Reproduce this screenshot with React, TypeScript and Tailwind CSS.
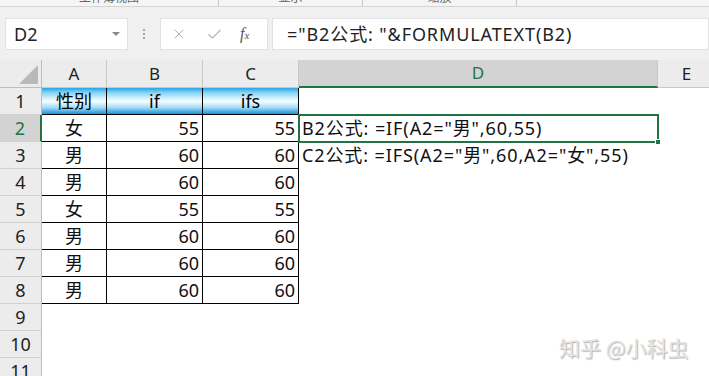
import React from "react";
import { X, Check } from "lucide-react";

const FONT = '"Noto Sans", "Noto Sans CJK SC", sans-serif';

const rows: { a: string; b: string; c: string }[] = [
  { a: "女", b: "55", c: "55" },
  { a: "男", b: "60", c: "60" },
  { a: "男", b: "60", c: "60" },
  { a: "女", b: "55", c: "55" },
  { a: "男", b: "60", c: "60" },
  { a: "男", b: "60", c: "60" },
  { a: "男", b: "60", c: "60" },
];

const dText: Record<number, string> = {
  2: 'B2公式: =IF(A2="男",60,55)',
  3: 'C2公式: =IFS(A2="男",60,A2="女",55)',
};

function RowHeader({ n }: { n: number }) {
  const selected = n === 2;
  return (
    <div
      className={
        "w-[42px] shrink-0 h-full flex items-center justify-center text-[18px] border-b border-b-[#d0d0d0] " +
        (selected
          ? "bg-[#d3d3d3] text-[#217346] border-r-2 border-r-[#217346]"
          : "bg-[#ececec] text-[#222] border-r border-r-[#bdbdbd]")
      }
    >
      {n}
    </div>
  );
}

function DCell({ n }: { n: number }) {
  return (
    <div className="relative w-[359px] shrink-0 h-full flex items-center pl-[3px] text-[18px] tracking-[0.9px] text-[#111] whitespace-nowrap">
      {dText[n] ?? ""}
      {n === 2 && (
        <div className="absolute left-[-1px] top-[-1px] w-[361px] h-[29px] border-2 border-[#217346]">
          <div className="absolute right-[-4px] bottom-[-4px] w-[6px] h-[6px] bg-[#217346] border border-white" />
        </div>
      )}
    </div>
  );
}

export default function App() {
  const grad =
    "bg-[linear-gradient(180deg,#2aa3e5_0%,#86d3f6_18%,#e6f7fe_45%,#f4fcff_52%,#a2ddf7_75%,#1a90d8_100%)]";
  return (
    <div
      className="relative w-[709px] h-[376px] overflow-hidden bg-white"
      style={{ fontFamily: FONT }}
    >
      {/* ribbon bottom strip */}
      <div className="h-[7px] bg-[#f5f5f5] border-b border-[#d4d4d4] flex overflow-hidden text-[12px] text-[#666]">
        <div className="w-[218px] flex justify-center items-end">
          <span className="leading-[16px] whitespace-nowrap">工作簿视图</span>
        </div>
        <div className="w-px bg-[#c8c8c8]" />
        <div className="w-[143px] flex justify-center items-end">
          <span className="leading-[16px] whitespace-nowrap">显示</span>
        </div>
        <div className="w-px bg-[#c8c8c8]" />
        <div className="w-[153px] flex justify-center items-end">
          <span className="leading-[16px] whitespace-nowrap">缩放</span>
        </div>
        <div className="w-px bg-[#c8c8c8]" />
      </div>

      {/* formula bar */}
      <div className="h-[53px] bg-[#f0f0f0] flex items-center pt-[1px]">
        <div className="ml-[5px] w-[123px] h-[32px] bg-white border border-[#e2e2e2] flex items-center justify-between pl-[8px] pr-[7px]">
          <span className="text-[18px] text-[#222]">D2</span>
          <div className="w-0 h-0 border-x-[4px] border-x-transparent border-t-[4px] border-t-[#8a8a8a]" />
        </div>
        <div className="w-[32px] flex flex-col items-center gap-[2px]">
          <div className="w-[2px] h-[2px] bg-[#a8a8a8]" />
          <div className="w-[2px] h-[2px] bg-[#a8a8a8]" />
          <div className="w-[2px] h-[2px] bg-[#a8a8a8]" />
        </div>
        <div className="w-[108px] h-[32px] bg-white border border-[#e2e2e2] flex items-center">
          <X className="ml-[10px] text-[#b0b0b0]" size={16} strokeWidth={1.5} />
          <Check className="ml-[19px] text-[#b0b0b0]" size={17} strokeWidth={1.5} />
          <span
            className="ml-[17px] text-[16px] italic text-[#555]"
            style={{ fontFamily: '"Liberation Serif", serif' }}
          >
            f<span className="text-[11px]">x</span>
          </span>
        </div>
        <div className="ml-[4px] flex-1 h-[32px] bg-white border border-[#e2e2e2] flex items-center pl-[14px] text-[18px] tracking-[0.9px] text-[#222] whitespace-nowrap">
          ="B2公式: "&amp;FORMULATEXT(B2)
        </div>
      </div>

      {/* column header */}
      <div className="h-[28px] flex bg-[#ececec] text-[17px]">
        <div className="relative w-[42px] shrink-0 h-full border-r border-b border-[#bdbdbd]">
          <div className="absolute right-[3px] bottom-[3px] w-0 h-0 border-l-[19px] border-l-transparent border-b-[19px] border-b-[#b9b9b9]" />
        </div>
        <div className="w-[65px] shrink-0 flex items-center justify-center border-r border-b border-[#c8c8c8] text-[#222]">A</div>
        <div className="w-[96px] shrink-0 flex items-center justify-center border-r border-b border-[#c8c8c8] text-[#222]">B</div>
        <div className="w-[96px] shrink-0 flex items-center justify-center border-r border-b border-[#c8c8c8] text-[#222]">C</div>
        <div className="w-[359px] shrink-0 flex items-center justify-center bg-[#d3d3d3] border-r border-r-[#c8c8c8] border-b-2 border-b-[#217346] text-[#217346]">D</div>
        <div className="flex-1 flex items-center justify-center border-b border-[#c8c8c8] text-[#222] pl-[6px]">E</div>
      </div>

      {/* row 1 */}
      <div className="h-[27px] flex text-[18px]">
        <RowHeader n={1} />
        <div className={"w-[65px] shrink-0 flex items-center justify-center border-r border-b border-black " + grad}>性别</div>
        <div className={"w-[96px] shrink-0 flex items-center justify-center border-r border-b border-black " + grad}>if</div>
        <div className={"w-[96px] shrink-0 flex items-center justify-center border-r border-b border-black " + grad}>ifs</div>
        <DCell n={1} />
      </div>

      {rows.map((r, i) => {
        const n = i + 2;
        return (
          <div key={n} className="h-[27px] flex text-[18px] text-[#111]">
            <RowHeader n={n} />
            <div className="w-[65px] shrink-0 flex items-center justify-center border-r border-b border-black">{r.a}</div>
            <div className="w-[96px] shrink-0 flex items-center justify-end pr-[3px] border-r border-b border-black">{r.b}</div>
            <div className="w-[96px] shrink-0 flex items-center justify-end pr-[3px] border-r border-b border-black">{r.c}</div>
            <DCell n={n} />
          </div>
        );
      })}

      {[9, 10, 11].map((n) => (
        <div key={n} className="h-[27px] flex">
          <RowHeader n={n} />
        </div>
      ))}

      {/* watermark */}
      <div
        className="absolute left-[559px] top-[332px] text-[21px] text-[#e4e4e4] whitespace-nowrap [text-shadow:1px_1px_1px_rgba(0,0,0,0.3)]"
        style={{ fontFamily: '"Noto Sans CJK SC", sans-serif' }}
      >
        知乎 @小科虫
      </div>
    </div>
  );
}
